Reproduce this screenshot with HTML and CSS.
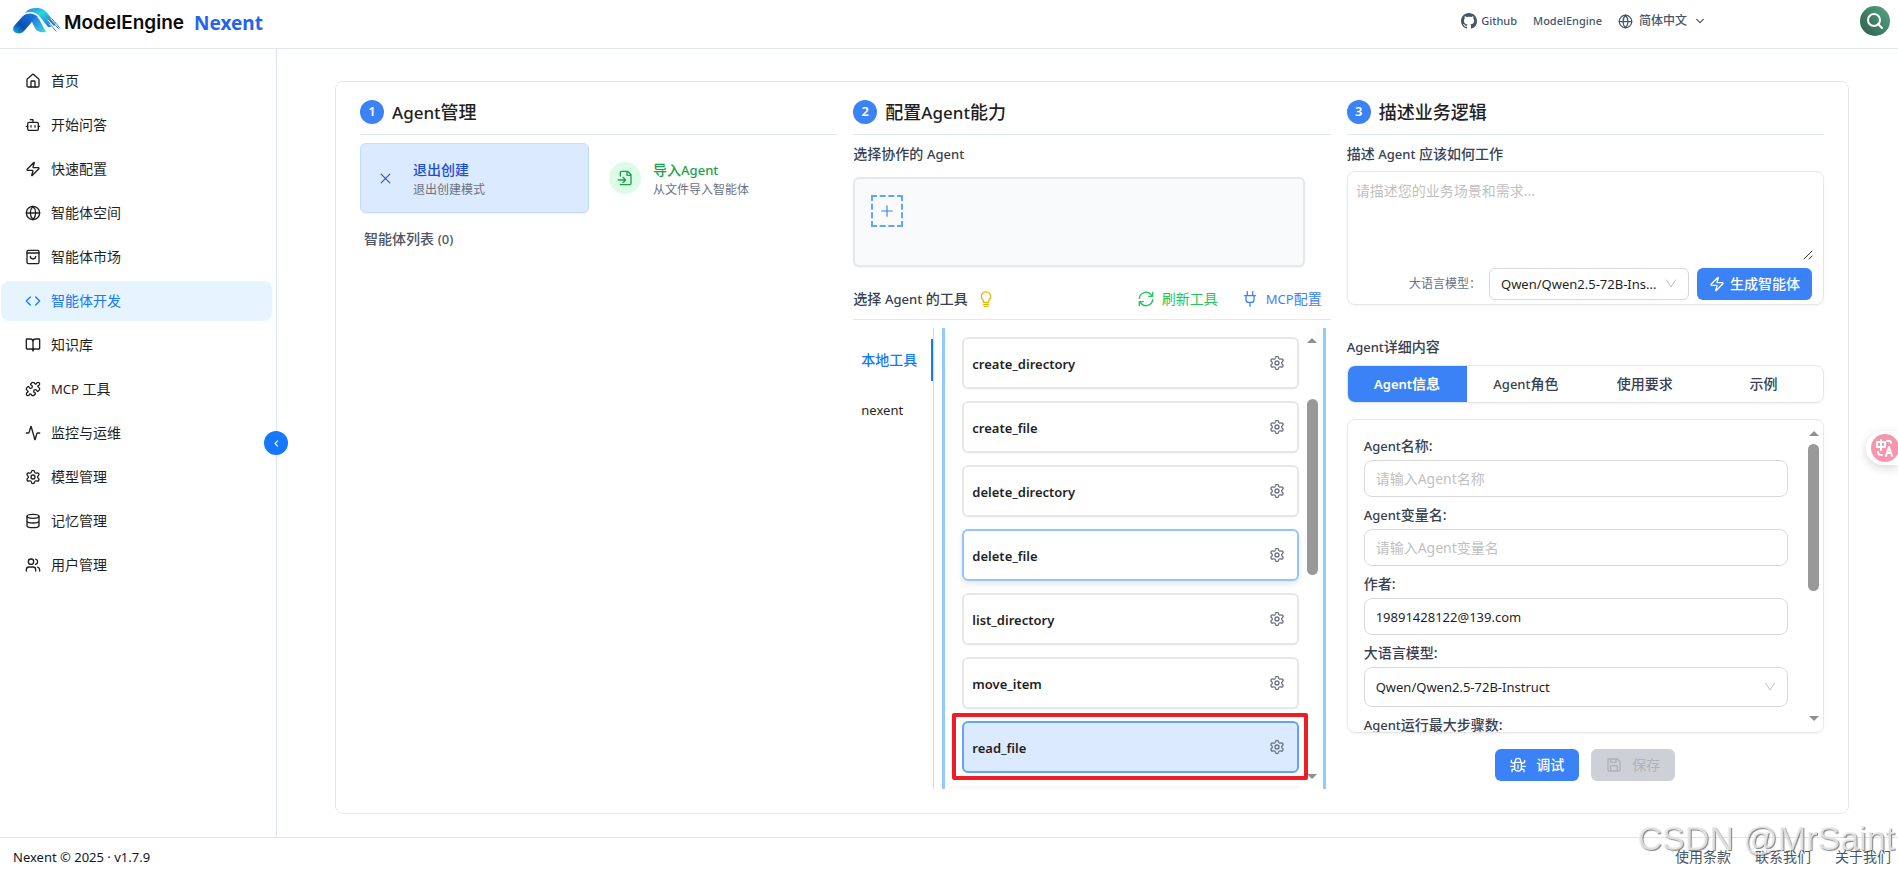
FILE: index.html
```html
<!doctype html>
<html lang="zh-CN">
<head>
	<title>Nexent</title>
	<meta charset="utf-8" />
	<meta name="viewport" content="width=device-width, initial-scale=1" />
	<link rel="stylesheet" href="styles.css">
</head>

<body>
	<!-- shared icons -->
	<svg class="sprite" aria-hidden="true">
		<symbol id="i-zap" viewBox="0 0 24 24"><path d="M4 14a1 1 0 0 1-.78-1.63l9.9-10.2a.5.5 0 0 1 .86.46l-1.92 6.02A1 1 0 0 0 13 10h7a1 1 0 0 1 .78 1.63l-9.9 10.2a.5.5 0 0 1-.86-.46l1.92-6.02A1 1 0 0 0 11 14z"/></symbol>
		<symbol id="i-globe" viewBox="0 0 24 24"><circle cx="12" cy="12" r="10"/><path d="M12 2a14.5 14.5 0 0 0 0 20 14.5 14.5 0 0 0 0-20M2 12h20"/></symbol>
		<symbol id="i-gear" viewBox="0 0 24 24"><path d="M9.67 4.14a2.34 2.34 0 0 1 4.66 0 2.34 2.34 0 0 0 3.32 1.91 2.34 2.34 0 0 1 2.33 4.04 2.34 2.34 0 0 0 0 3.83 2.34 2.34 0 0 1-2.33 4.03 2.34 2.34 0 0 0-3.32 1.92 2.34 2.34 0 0 1-4.66 0 2.34 2.34 0 0 0-3.32-1.92 2.34 2.34 0 0 1-2.33-4.03 2.34 2.34 0 0 0 0-3.83 2.34 2.34 0 0 1 2.33-4.04 2.34 2.34 0 0 0 3.32-1.91"/><circle cx="12" cy="12" r="3"/></symbol>
		<symbol id="i-down" viewBox="0 0 24 24"><path d="M3 4l9 14 9-14"/></symbol>
	</svg>

	<header class="topbar">
		<a class="brand" href="#">
			<svg class="logo" viewBox="0 0 48 26" aria-hidden="true">
				<defs>
					<linearGradient id="g1" x1="0" y1="1" x2="1" y2="0"><stop offset="0" stop-color="#12b4e8"/><stop offset=".35" stop-color="#0b4fae"/><stop offset="1" stop-color="#1f7df0"/></linearGradient>
					<linearGradient id="g2" x1="0" y1="0" x2="1" y2="1"><stop offset="0" stop-color="#2a7fe8"/><stop offset=".4" stop-color="#2cd3dd"/><stop offset="1" stop-color="#1766d8"/></linearGradient>
					<linearGradient id="g3" x1="0" y1="0" x2="1" y2="1"><stop offset="0" stop-color="#1a6be0"/><stop offset="1" stop-color="#3fe0dc"/></linearGradient>
				</defs>
				<path fill="url(#g2)" d="M12 5C15 1 19 0 24 0c5 0 8 2 11 6l8 10-2 2-7-5 4 6-3 0L27 9C23 4 18 3 12 5z"/>
				<path fill="url(#g1)" d="M1 18 9 9c5-5 12-4 16 0l-3 2c-2 1-3 2-4 4l-7 8c-4 5-14 2-10-5z"/>
				<path fill="url(#g3)" d="M18 12c3-3 6-4 8-1l7 13c-5 1-9 0-11-4z"/>
				<path stroke="#fff" stroke-width="1" d="M35 12l9 10M38 11l8 9"/>
				<path stroke="#2468d8" stroke-width="1" stroke-dasharray="3 1" d="M35 14l8 9M37 12l9 9M39 11l8 9"/>
			</svg>
			<span class="engine">ModelEngine</span>
			<span class="product">Nexent</span>
		</a>
		<nav class="toplinks">
			<a href="#"><svg class="github" viewBox="0 0 16 16"><path d="M8 0C3.58 0 0 3.58 0 8c0 3.54 2.29 6.53 5.47 7.59.4.07.55-.17.55-.38 0-.19-.01-.82-.01-1.49-2.01.37-2.53-.49-2.69-.94-.09-.23-.48-.94-.82-1.13-.28-.15-.68-.52-.01-.53.63-.01 1.08.58 1.23.82.72 1.21 1.87.87 2.33.66.07-.52.28-.87.51-1.07-1.78-.2-3.64-.89-3.64-3.95 0-.87.31-1.59.82-2.15-.08-.2-.36-1.02.08-2.12 0 0 .67-.21 2.2.82.64-.18 1.32-.27 2-.27s1.36.09 2 .27c1.53-1.04 2.2-.82 2.2-.82.44 1.1.16 1.92.08 2.12.51.56.82 1.27.82 2.15 0 3.07-1.87 3.75-3.65 3.95.29.25.54.73.54 1.48 0 1.07-.01 1.93-.01 2.2 0 .21.15.46.55.38A8 8 0 0 0 16 8c0-4.42-3.58-8-8-8z"/></svg>Github</a>
			<a href="#">ModelEngine</a>
			<button class="lang" type="button"><svg class="icon14"><use href="#i-globe"/></svg>简体中文<svg class="chev" viewBox="0 0 24 24"><path d="M4 8l8 8 8-8"/></svg></button>
		</nav>
		<button class="avatar" type="button" aria-label="账户"><svg viewBox="0 0 30 30"><circle cx="14" cy="14" r="6"/><path d="M18 18l4 4"/></svg></button>
	</header>

	<div class="body">
		<aside class="sider">
			<nav class="menu">
				<a href="#"><svg class="icon" viewBox="0 0 24 24"><path d="M15 21v-8a1 1 0 0 0-1-1h-4a1 1 0 0 0-1 1v8"/><path d="M3 10a2 2 0 0 1 .7-1.5l7-6a2 2 0 0 1 2.6 0l7 6A2 2 0 0 1 21 10v9a2 2 0 0 1-2 2H5a2 2 0 0 1-2-2z"/></svg>首页</a>
				<a href="#"><svg class="icon" viewBox="0 0 24 24"><path d="M12 8V4H8"/><rect x="4" y="8" width="16" height="12" rx="2"/><path d="M2 14h2M20 14h2M15 13v2M9 13v2"/></svg>开始问答</a>
				<a href="#"><svg class="icon"><use href="#i-zap"/></svg>快速配置</a>
				<a href="#"><svg class="icon"><use href="#i-globe"/></svg>智能体空间</a>
				<a href="#"><svg class="icon" viewBox="0 0 24 24"><rect x="3" y="2" width="18" height="20" rx="2"/><path d="M3 6h18M16 11a4 4 0 0 1-8 0"/></svg>智能体市场</a>
				<a href="#" class="active"><svg class="icon" viewBox="0 0 24 24"><path d="m16 18 6-6-6-6M8 6l-6 6 6 6"/></svg>智能体开发</a>
				<a href="#"><svg class="icon" viewBox="0 0 24 24"><path d="M12 7v14M3 18a1 1 0 0 1-1-1V4a1 1 0 0 1 1-1h5a4 4 0 0 1 4 4 4 4 0 0 1 4-4h5a1 1 0 0 1 1 1v13a1 1 0 0 1-1 1h-6a3 3 0 0 0-3 3 3 3 0 0 0-3-3z"/></svg>知识库</a>
				<a href="#"><svg class="icon" viewBox="0 0 24 24"><path d="M15.39 4.39a1 1 0 0 0 1.68-.474 2.5 2.5 0 1 1 3.014 3.015 1 1 0 0 0-.474 1.68l1.683 1.682a2.414 2.414 0 0 1 0 3.414L19.61 15.39a1 1 0 0 1-1.68-.474 2.5 2.5 0 1 0-3.014 3.015 1 1 0 0 1 .474 1.68l-1.683 1.682a2.414 2.414 0 0 1-3.414 0L8.61 19.61a1 1 0 0 0-1.68.474 2.5 2.5 0 1 1-3.014-3.015 1 1 0 0 0 .474-1.68l-1.683-1.682a2.414 2.414 0 0 1 0-3.414L4.39 8.61a1 1 0 0 1 1.68.474 2.5 2.5 0 1 0 3.014-3.015 1 1 0 0 1-.474-1.68l1.683-1.682a2.414 2.414 0 0 1 3.414 0z"/></svg><span><span class="latin">MCP</span> 工具</span></a>
				<a href="#"><svg class="icon" viewBox="0 0 24 24"><path d="M22 12h-2.48a2 2 0 0 0-1.93 1.46l-2.35 8.36a.25.25 0 0 1-.48 0L9.24 2.18a.25.25 0 0 0-.48 0l-2.35 8.36A2 2 0 0 1 4.49 12H2"/></svg>监控与运维</a>
				<a href="#"><svg class="icon"><use href="#i-gear"/></svg>模型管理</a>
				<a href="#"><svg class="icon" viewBox="0 0 24 24"><ellipse cx="12" cy="5" rx="9" ry="3"/><path d="M3 5v14a9 3 0 0 0 18 0V5M3 12a9 3 0 0 0 18 0"/></svg>记忆管理</a>
				<a href="#"><svg class="icon" viewBox="0 0 24 24"><path d="M16 21v-2a4 4 0 0 0-4-4H6a4 4 0 0 0-4 4v2M16 3.13a4 4 0 0 1 0 7.75M22 21v-2a4 4 0 0 0-3-3.87"/><circle cx="9" cy="7" r="4"/></svg>用户管理</a>
			</nav>
			<button class="collapse" type="button" aria-label="收起"><svg viewBox="0 0 24 24"><path d="M15 5l-7 7 7 7"/></svg></button>
		</aside>

		<main class="panel">
			<section class="col">
				<h2><span class="num">1</span><span><span class="latin">Agent</span>管理</span></h2>
				<div class="actions">
					<button class="action exit" type="button">
						<span class="badge"><svg viewBox="0 0 24 24"><path d="M4 4l16 16M20 4L4 20"/></svg></span>
						<span class="words"><strong>退出创建</strong><small>退出创建模式</small></span>
					</button>
					<button class="action import" type="button">
						<span class="badge"><svg viewBox="0 0 24 24"><path d="M5 9V4a2 2 0 0 1 2-2h9l5 5v13a2 2 0 0 1-2 2H5M15 2v6h6M2 15h11M9 11l4 4-4 4"/></svg></span>
						<span class="words"><strong>导入<span class="latin">Agent</span></strong><small>从文件导入智能体</small></span>
					</button>
				</div>
				<p class="count">智能体列表 <span class="latin">(0)</span></p>
			</section>

			<section class="col">
				<h2><span class="num">2</span><span>配置<span class="latin">Agent</span>能力</span></h2>
				<h3 class="sub">选择协作的 <span class="latin">Agent</span></h3>
				<div class="partners">
					<button class="add" type="button" aria-label="添加"><svg viewBox="0 0 24 24"><path d="M12 3v18M3 12h18"/></svg></button>
				</div>
				<div class="toolhead">
					<h3>选择 <span class="latin">Agent</span> 的工具</h3>
					<svg class="bulb" viewBox="0 0 24 24"><path d="M8 17v-3a7 7 0 1 1 8 0v3zM8 20h8M9 23h6"/></svg>
					<button class="refresh" type="button"><svg viewBox="0 0 24 24"><path d="M2 11a10 10 0 0 1 18-5l2 2M22 2v6h-6M22 13a10 10 0 0 1-18 5l-2-2M2 22v-6h6"/></svg>刷新工具</button>
					<button class="mcp" type="button"><svg viewBox="0 0 24 24"><path d="M8 1v6M16 1v6M4 7h16M6 7v6a4 4 0 0 0 4 4h4a4 4 0 0 0 4-4V7M12 17v6"/></svg><span><span class="latin">MCP</span>配置</span></button>
				</div>
				<div class="tools">
					<div class="sources">
						<button class="on" type="button">本地工具</button>
						<button type="button"><span class="latin">nexent</span></button>
					</div>
					<div class="toolbox">
						<ul class="toollist">
							<li class="edge"></li>
							<li><span>create_directory</span><button type="button" aria-label="设置"><svg><use href="#i-gear"/></svg></button></li>
							<li><span>create_file</span><button type="button" aria-label="设置"><svg><use href="#i-gear"/></svg></button></li>
							<li><span>delete_directory</span><button type="button" aria-label="设置"><svg><use href="#i-gear"/></svg></button></li>
							<li class="hover"><span>delete_file</span><button type="button" aria-label="设置"><svg><use href="#i-gear"/></svg></button></li>
							<li><span>list_directory</span><button type="button" aria-label="设置"><svg><use href="#i-gear"/></svg></button></li>
							<li><span>move_item</span><button type="button" aria-label="设置"><svg><use href="#i-gear"/></svg></button></li>
							<li class="picked"><span>read_file</span><button type="button" aria-label="设置"><svg><use href="#i-gear"/></svg></button></li>
							<li class="rest"></li>
						</ul>
						<div class="scroll"><i class="up"></i><i class="thumb"></i><i class="dn"></i></div>
					</div>
				</div>
			</section>

			<section class="col">
				<h2><span class="num">3</span>描述业务逻辑</h2>
				<h3 class="sub logic"><label for="desc">描述 <span class="latin">Agent</span> 应该如何工作</label></h3>
				<div class="prompt">
					<textarea id="desc" placeholder="请描述您的业务场景和需求..."></textarea>
					<svg class="grip" viewBox="0 0 10 10"><path d="M1 9l8-8M6 9l3-3"/></svg>
					<div class="generate">
						<label for="llm">大语言模型：</label>
						<span class="pick small"><select id="llm"><option>Qwen/Qwen2.5-72B-Ins...</option></select><svg><use href="#i-down"/></svg></span>
						<button class="primary" type="button"><svg class="icon"><use href="#i-zap"/></svg>生成智能体</button>
					</div>
				</div>
				<h3 class="detail"><span class="latin">Agent</span>详细内容</h3>
				<div class="tabs">
					<button class="on" type="button"><span class="latin">Agent</span>信息</button>
					<button type="button"><span class="latin">Agent</span>角色</button>
					<button type="button">使用要求</button>
					<button type="button">示例</button>
				</div>
				<div class="form">
					<div class="fields">
						<label for="name"><span class="latin">Agent</span>名称:</label>
						<input id="name" type="text" placeholder="请输入Agent名称">
						<label for="var"><span class="latin">Agent</span>变量名:</label>
						<input id="var" type="text" placeholder="请输入Agent变量名">
						<label for="author">作者:</label>
						<input id="author" type="text" value="19891428122@139.com">
						<label for="model">大语言模型:</label>
						<span class="pick"><select id="model"><option>Qwen/Qwen2.5-72B-Instruct</option></select><svg><use href="#i-down"/></svg></span>
						<p class="steps"><span class="latin">Agent</span>运行最大步骤数:</p>
					</div>
					<div class="scroll"><i class="up"></i><i class="thumb"></i><i class="dn"></i></div>
				</div>
				<div class="buttons">
					<button class="primary" type="button"><svg class="icon" viewBox="0 0 24 24"><path d="M8 8V6a4 4 0 0 1 8 0v2M7 8h10v8a5 5 0 0 1-10 0zM12 12v5M1 14h6M17 14h6M2 5v3l5 2M22 5v3l-5 2M3 22v-3l4-1M21 22v-3l-4-1"/></svg>调试</button>
					<button class="primary" type="button" disabled><svg class="icon" viewBox="0 0 24 24"><path d="M3 4a1 1 0 0 1 1-1h13l4 4v13a1 1 0 0 1-1 1H4a1 1 0 0 1-1-1zM7 3v5h8V3M7 21v-8h10v8"/></svg>保存</button>
				</div>
			</section>
		</main>
	</div>

	<footer class="foot">
		<span class="latin">Nexent © 2025 · v1.7.9</span>
		<nav><a href="#">使用条款</a><a href="#">联系我们</a><a href="#">关于我们</a></nav>
	</footer>

	<button class="translate" type="button" aria-label="翻译"><svg viewBox="0 0 28 28"><circle cx="14" cy="14" r="14" fill="#f596ae"/><path d="M6 8h8v5H6zM10 6v10M16 7h2q2 0 2 2M7 18q0 3 3 3h1M15 22l3-9 3 9M16 19h4"/></svg></button>
	<div class="watermark">CSDN @MrSaint</div>
</body>
</html>
```
FILE: styles.css
```css
* {
	box-sizing:border-box;
}

body {
	margin:0;
	height:100vh;
	display:flex;
	flex-direction:column;
	overflow:hidden;
	background:#fff;
	color:#1f1f1f;
	font-family:"Noto Sans", "Noto Sans CJK SC", sans-serif;
	font-size:14px;
	line-height:22px;
}

a {
	color:inherit;
	text-decoration:none;
}

h2, h3, p, ul {
	margin:0;
	padding:0;
}

button, input, select, textarea {
	font:inherit;
	color:inherit;
	margin:0;
}

button {
	border:0;
	padding:0;
	background:none;
}

svg {
	fill:none;
	stroke:currentColor;
	stroke-width:2;
	stroke-linecap:round;
	stroke-linejoin:round;
	flex:none;
}

.sprite {
	display:none;
}

/* latin letters run large next to the chinese ones */
.latin {
	font-size:13px;
}

.icon {
	width:16px;
	height:16px;
}

.icon14 {
	width:15px;
	height:15px;
}

/* top bar */
.topbar {
	display:flex;
	align-items:center;
	height:49px;
	padding:0 8px 6px 13px;
	border-bottom:1px solid #dde7f1;
}

.brand {
	display:flex;
	align-items:center;
	flex:1;
}

.logo {
	width:48px;
	height:26px;
	stroke:none;
	margin-right:3px;
}

.engine {
	padding-top:4px;
	font:600 19px/28px Inter, sans-serif;
	color:#0b0b0b;
}

.product {
	margin-left:10px;
	padding-top:4px;
	font-size:19px;
	font-weight:700;
	color:#2563eb;
}

.toplinks {
	display:flex;
	gap:16px;
	margin-right:155px;
	font-size:11px;
	font-weight:500;
	color:#475569;
}

.toplinks a, .lang {
	display:flex;
	align-items:center;
	gap:4px;
}

.lang {
	gap:6px;
	font-size:12px;
}

.github {
	width:16px;
	height:16px;
	fill:currentColor;
	stroke:none;
}

.chev {
	width:10px;
	height:10px;
	margin-left:2px;
	stroke-width:3;
}

.avatar {
	width:30px;
	height:30px;
	border-radius:50%;
	background:linear-gradient(50deg, #2c5c4c, #58a683);
	color:#fff;
}

.avatar svg {
	display:block;
}

/* left menu */
.body {
	display:flex;
	flex:1;
	min-height:0;
}

.sider {
	position:relative;
	width:277px;
	flex:none;
	border-right:1px solid #dde7f1;
}

.menu {
	display:flex;
	flex-direction:column;
	gap:4px;
	padding:12px 4px 0 1px;
}

.menu a {
	display:flex;
	align-items:center;
	gap:10px;
	height:40px;
	padding-left:24px;
	border-radius:8px;
}

.menu .active {
	background:#e6f4ff;
	color:#1677ff;
}

.collapse {
	position:absolute;
	right:-12px;
	top:calc(50% - 12px);
	display:grid;
	place-items:center;
	width:24px;
	height:24px;
	border-radius:50%;
	background:#1677ff;
	color:#fff;
}

.collapse svg {
	width:9px;
	height:9px;
	stroke-width:3;
}

/* main card */
.panel {
	flex:1;
	min-width:0;
	display:grid;
	grid-template-columns:repeat(3, minmax(0, 1fr));
	gap:16px;
	margin:32px 49px 23px 58px;
	padding:16px 24px 24px;
	border:1px solid #e5e7eb;
	border-radius:8px;
}

.col {
	display:flex;
	flex-direction:column;
	min-height:0;
}

h2 {
	display:flex;
	align-items:center;
	gap:8px;
	height:37px;
	padding-bottom:8px;
	border-bottom:1px solid #e2e8f0;
	font-size:18px;
	font-weight:500;
	line-height:28px;
}

h2 .latin {
	font-size:17px;
}

.num {
	width:24px;
	height:24px;
	border-radius:50%;
	background:#3b82f6;
	color:#fff;
	font-size:13px;
	font-weight:600;
	line-height:23px;
	text-align:center;
}

h3 {
	font-size:14px;
	font-weight:500;
	color:#374151;
}

.actions {
	display:grid;
	grid-template-columns:48% 1fr;
	gap:11px;
	margin-top:8px;
}

.action {
	display:flex;
	align-items:center;
	gap:12px;
	height:70px;
	padding:0 8px;
	border:1px solid transparent;
	border-radius:6px;
	text-align:left;
}

.exit {
	background:#dbeafe;
	border-color:#bfdbfe;
	color:#1d4ed8;
	box-shadow:0 1px 2px rgba(0,0,0,.05);
}

.import {
	color:#16a34a;
}

.badge {
	display:grid;
	place-items:center;
	width:32px;
	height:32px;
	border-radius:50%;
}

.import .badge {
	background:#dcfce7;
}

.badge svg {
	width:16px;
	height:16px;
}

.exit .badge svg {
	width:13px;
	height:13px;
}

.words {
	padding-top:3px;
}

.words strong, .words small {
	display:block;
	line-height:20px;
}

.words strong {
	font-weight:500;
}

.words small {
	font-size:12px;
	color:#6b7280;
}

.count {
	margin:15px 0 0 4px;
	font-weight:500;
	color:#4b5563;
}

/* partners and tools */
.sub {
	margin:8px 0 12px;
}

.logic {
	margin-bottom:6px;
}

.partners {
	height:90px;
	margin-right:26px;
	padding:16px;
	border:2px solid #e5e7eb;
	border-radius:6px;
	background:#f9fafb;
	box-shadow:0 1px 2px rgba(0,0,0,.05);
}

.add {
	display:grid;
	place-items:center;
	width:32px;
	height:32px;
	border:2px dashed #60a5fa;
	color:#3b82f6;
}

.add svg {
	width:14px;
	height:14px;
}

.toolhead {
	display:flex;
	align-items:center;
	height:53px;
	margin-bottom:8px;
	padding:11px 9px 0 0;
	border-bottom:1px solid #e2e8f0;
}

.toolhead svg {
	width:16px;
	height:16px;
}

.bulb {
	margin:0 auto 0 10px;
	color:#eab308;
}

.refresh, .mcp {
	display:flex;
	align-items:center;
	gap:8px;
	color:#22c55e;
}

.mcp {
	margin-left:24px;
	color:#3b82f6;
}

.tools {
	display:flex;
	flex:1;
	min-height:0;
}

.sources {
	display:flex;
	flex-direction:column;
	gap:16px;
	width:81px;
	padding-top:11px;
	border-right:1px solid #d9d9d9;
}

.sources button {
	height:42px;
	padding:0 0 0 8px;
	text-align:left;
}

.sources button + button {
	height:26px;
}

.sources .on {
	border-right:2px solid #1677ff;
	color:#1677ff;
	font-weight:500;
}

.toolbox {
	display:flex;
	flex:1;
	margin:0 5px 0 8px;
	padding-right:5px;
	border:solid #91caff;
	border-width:0 3px;
	overflow:hidden;
}

.toollist {
	display:flex;
	flex-direction:column;
	gap:12px;
	flex:1;
	padding-left:17px;
	list-style:none;
}

.toollist li {
	position:relative;
	display:flex;
	justify-content:space-between;
	align-items:center;
	height:52px;
	flex:none;
	padding:0 12px 0 8px;
	border:2px solid #e5e7eb;
	border-radius:6px;
	font-size:13px;
	font-weight:600;
	box-shadow:0 1px 2px rgba(0,0,0,.05);
}

.toollist li span {
	padding-top:2px;
}

.toollist .edge {
	height:52px;
	margin-top:-55px;
}

.toollist li button {
	display:flex;
	color:#6b7280;
}

.toollist li svg {
	width:16px;
	height:16px;
}

.toollist .hover {
	border-color:#93c5fd;
	box-shadow:0 3px 6px rgba(0,0,0,.1);
}

.toollist .picked {
	border-color:#60a5fa;
	background:#dbeafe;
}

/* red frame drawn around the chosen tool */
.picked::after {
	content:"";
	position:absolute;
	inset:-10px -11px -9px -12px;
	border:4px solid #ee1c25;
	border-radius:2px;
	z-index:1;
}

.toollist .rest {
	margin-left:-12px;
	border:0;
	border-radius:0;
	background:#f9fafb;
	box-shadow:none;
}

.scroll {
	display:flex;
	flex-direction:column;
	align-items:center;
	width:11px;
}

.scroll i {
	border:5px solid transparent;
}

.scroll .up {
	border-top:0;
	border-bottom-color:#8f8f8f;
}

.scroll .dn {
	border-bottom:0;
	border-top-color:#8f8f8f;
	margin-top:auto;
}

.scroll .thumb {
	width:11px;
	height:176px;
	border:0;
	border-radius:6px;
	background:#999;
}

.toolbox .scroll {
	margin-left:8px;
	padding:10px 0;
}

.toolbox .thumb {
	margin-top:56px;
}

/* business logic */
.prompt {
	display:flex;
	flex-direction:column;
	height:134px;
	padding:4px 10px 4px 0;
	border:1px solid #e5e7eb;
	border-radius:8px;
	box-shadow:0 1px 2px rgba(0,0,0,.05);
}

.prompt textarea {
	flex:1;
	min-height:0;
	padding:4px 8px;
	border:0;
	outline:0;
	resize:none;
	background:none;
}

::placeholder {
	color:#bfbfbf;
	font-size:14px;
}

.grip {
	align-self:flex-end;
	width:10px;
	height:10px;
	margin-bottom:8px;
	stroke:#333;
	stroke-width:1;
}

.generate {
	display:flex;
	align-items:center;
	justify-content:flex-end;
	gap:8px;
	padding-right:1px;
}

.generate label {
	font-size:12px;
	color:#6b7280;
}

.pick {
	display:grid;
	align-items:center;
	height:40px;
	border:1px solid #d9d9d9;
	border-radius:8px;
}

.pick select, .pick svg {
	grid-area:1 / 1;
}

.pick select {
	width:100%;
	height:100%;
	padding:0 11px;
	border:0;
	appearance:none;
	background:none;
	font-size:13px;
}

.pick svg {
	justify-self:end;
	width:12px;
	height:12px;
	margin-right:11px;
	color:#bfbfbf;
	pointer-events:none;
}

.small {
	width:200px;
	height:32px;
	border-radius:6px;
}

.primary {
	display:flex;
	align-items:center;
	justify-content:center;
	gap:5px;
	height:32px;
	padding:0 12px;
	border-radius:6px;
	background:#3b82f6;
	color:#fff;
	font-weight:500;
}

.primary:disabled {
	background:#cdd0d7;
	color:#afb2b9;
	font-weight:400;
}

.detail {
	margin:31px 0 7px;
}

.tabs {
	display:flex;
	height:38px;
	border:1px solid #e5e7eb;
	border-radius:8px;
	overflow:hidden;
	box-shadow:0 1px 2px rgba(0,0,0,.05);
}

.tabs button {
	flex:1;
	color:#374151;
	font-weight:500;
}

.tabs .on {
	background:#3b82f6;
	color:#fff;
	font-weight:600;
}

.form {
	display:flex;
	flex:1;
	min-height:0;
	margin-top:16px;
	padding:0 4px 0 16px;
	border:1px solid #e5e7eb;
	border-radius:8px;
	overflow:hidden;
	box-shadow:0 1px 2px rgba(0,0,0,.05);
}

.fields {
	display:flex;
	flex-direction:column;
	flex:1;
	margin-right:20px;
	padding-top:15px;
}

.fields label {
	margin-bottom:3px;
	font-weight:500;
	color:#374151;
}

.fields input {
	height:37px;
	flex:none;
	margin-bottom:7px;
	padding:0 11px;
	border:1px solid #d9d9d9;
	border-radius:8px;
	font-size:13px;
}

.fields .pick {
	flex:none;
}

.steps {
	flex:none;
	margin-top:7px;
	font-weight:500;
	color:#374151;
}

.form .scroll {
	padding:11px 0;
}

.form .thumb {
	height:147px;
	margin-top:8px;
}

.buttons {
	display:flex;
	justify-content:center;
	gap:12px;
	padding:16px 0 8px;
}

.buttons .primary {
	width:84px;
	gap:10px;
}

/* footer */
.foot {
	display:flex;
	justify-content:space-between;
	padding:8px 7px 2px 13px;
	border-top:1px solid #dde3ee;
	color:#0f172a;
}

.foot nav {
	display:flex;
	gap:24px;
	color:#475569;
}

/* floating over the page */
.translate {
	position:fixed;
	right:0;
	top:431px;
	width:32px;
	height:34px;
	padding:3px 0 3px 5px;
	border-radius:17px 0 0 17px;
	background:#fff;
	box-shadow:0 3px 10px rgba(0,0,0,.16);
	overflow:hidden;
}

.translate svg {
	display:block;
	width:28px;
	height:28px;
	stroke:#fff;
}

.translate circle {
	stroke:none;
}

.watermark {
	position:fixed;
	right:3px;
	bottom:12px;
	font:34px/40px "Liberation Sans", sans-serif;
	color:rgba(235,235,235,.85);
	text-shadow:1px 1px 1px rgba(0,0,0,.5);
	pointer-events:none;
}
```
